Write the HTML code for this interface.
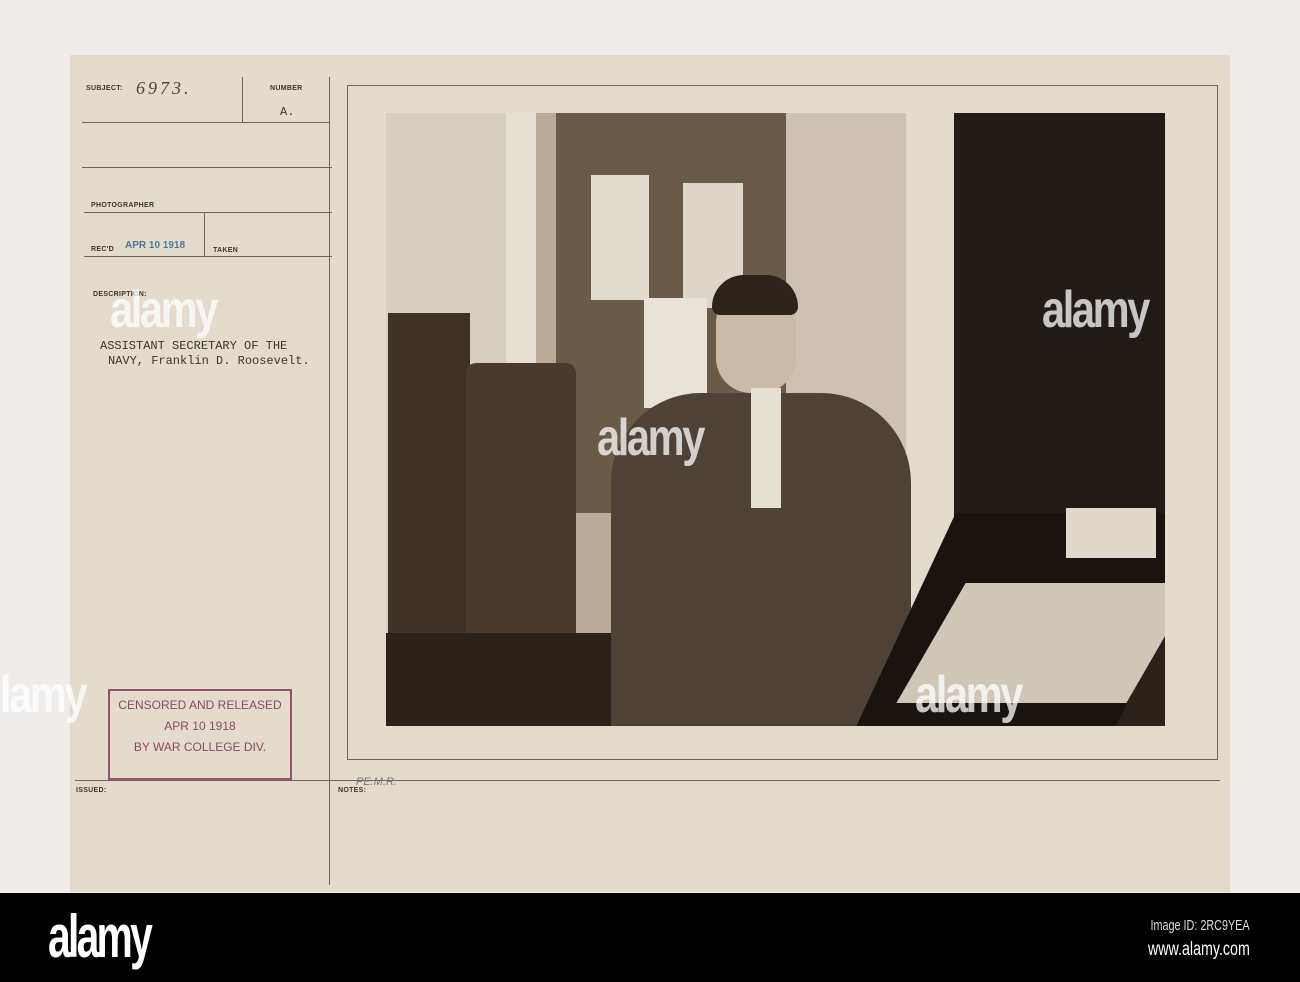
<!DOCTYPE html>
<html><head><style>
body{margin:0;width:1300px;height:982px;background:#efecea;position:relative;overflow:hidden;font-family:"Liberation Sans",sans-serif}
.a{position:absolute}
.card{left:70px;top:55px;width:1160px;height:837px;background:#e4dbcc}
.l{position:absolute;background:#6e665c}
.t{position:absolute;font-size:7px;font-weight:bold;color:#3a352f;letter-spacing:.3px}
.mono{position:absolute;font-family:"Liberation Mono",monospace;font-size:12px;color:#3a3530}
.bar{left:0;top:893px;width:1300px;height:89px;background:#000}
.wm{position:absolute;color:rgba(255,255,255,.75);font-weight:bold;font-size:52px;letter-spacing:-3px;transform:scaleX(.8);transform-origin:left}
</style></head><body>
<div class="a card"></div>
<div class="l" style="left:82px;top:122px;width:248px;height:1px"></div>
<div class="l" style="left:82px;top:167px;width:250px;height:1px"></div>
<div class="l" style="left:84px;top:212px;width:248px;height:1px"></div>
<div class="l" style="left:84px;top:256px;width:248px;height:1px"></div>
<div class="l" style="left:242px;top:77px;width:1px;height:45px"></div>
<div class="l" style="left:204px;top:213px;width:1px;height:43px"></div>
<div class="l" style="left:329px;top:77px;width:1px;height:808px"></div>
<div class="l" style="left:75px;top:780px;width:1145px;height:1px"></div>
<div class="l" style="left:347px;top:85px;width:871px;height:1px"></div>
<div class="l" style="left:347px;top:85px;width:1px;height:675px"></div>
<div class="l" style="left:1217px;top:85px;width:1px;height:675px"></div>
<div class="l" style="left:347px;top:759px;width:871px;height:1px"></div>
<div class="t" style="left:86px;top:85px">SUBJECT:</div>
<div class="a" style="left:136px;top:78px;font-family:'Liberation Serif',serif;font-style:italic;font-size:18px;color:#4a4540;letter-spacing:3px">6973.</div>
<div class="t" style="left:270px;top:85px">NUMBER</div>
<div class="mono" style="left:280px;top:105px">A.</div>
<div class="t" style="left:91px;top:202px">PHOTOGRAPHER</div>
<div class="t" style="left:91px;top:246px">REC'D</div>
<div class="a" style="left:125px;top:240px;font-size:10px;color:#4c7a95;font-weight:bold">APR 10 1918</div>
<div class="t" style="left:213px;top:247px">TAKEN</div>
<div class="t" style="left:93px;top:291px">DESCRIPTION:</div>
<div class="mono" style="left:100px;top:339px">ASSISTANT SECRETARY OF THE</div>
<div class="mono" style="left:108px;top:354px">NAVY, Franklin D. Roosevelt.</div>
<div class="a" style="left:108px;top:689px;width:184px;height:91px;border:2px solid #96506a;box-sizing:border-box;color:#8a4a64;text-align:center;font-size:12px;line-height:21px;padding-top:4px">CENSORED AND RELEASED<br>APR 10 1918<br>BY WAR COLLEGE DIV.</div>
<div class="t" style="left:76px;top:787px">ISSUED:</div>
<div class="t" style="left:338px;top:787px">NOTES:</div>
<div class="a" style="left:356px;top:776px;font-size:11px;color:#777;font-style:italic">PE.M.R.</div>
<div class="a" style="left:386px;top:113px;width:779px;height:613px;background:#b9ab98;overflow:hidden">
 <div class="a" style="left:0;top:0;width:120px;height:613px;background:#d7cebf"></div>
 <div class="a" style="left:120px;top:0;width:30px;height:613px;background:#e6dfd4"></div>
 <div class="a" style="left:170px;top:0;width:230px;height:400px;background:#6a5a48"></div>
 <div class="a" style="left:205px;top:62px;width:58px;height:125px;background:#e2dbd0"></div>
 <div class="a" style="left:297px;top:70px;width:60px;height:125px;background:#ddd5c7"></div>
 <div class="a" style="left:258px;top:185px;width:63px;height:110px;background:#e8e2d8"></div>
 <div class="a" style="left:400px;top:0;width:120px;height:613px;background:#cdc2b2"></div>
 <div class="a" style="left:520px;top:0;width:50px;height:613px;background:#e2dacd"></div>
 <div class="a" style="left:568px;top:0;width:211px;height:613px;background:#231c16"></div>
 <div class="a" style="left:2px;top:200px;width:82px;height:320px;background:#3e3127"></div>
 <div class="a" style="left:80px;top:250px;width:110px;height:280px;background:#4a3a2e;border-radius:10px 10px 0 0"></div>
 <div class="a" style="left:0;top:520px;width:779px;height:93px;background:#2a211a"></div>
 <div class="a" style="left:330px;top:170px;width:80px;height:110px;background:#c9bba8;border-radius:40px 40px 35px 35px"></div>
 <div class="a" style="left:326px;top:162px;width:86px;height:40px;background:#2c231c;border-radius:40px 40px 10px 10px"></div>
 <div class="a" style="left:225px;top:280px;width:300px;height:333px;background:#4e4236;border-radius:90px 90px 0 0"></div>
 <div class="a" style="left:365px;top:275px;width:30px;height:120px;background:#e6dfd4"></div>
 <div class="a" style="left:520px;top:400px;width:260px;height:213px;background:#1a1410;transform:skewX(-25deg)"></div>
 <div class="a" style="left:680px;top:395px;width:90px;height:50px;background:#e0d8cb"></div>
 <div class="a" style="left:545px;top:470px;width:230px;height:120px;background:#cfc6b7;transform:skewX(-30deg)"></div>
</div>
<div class="wm" style="left:110px;top:280px">alamy</div>
<div class="wm" style="left:1042px;top:280px">alamy</div>
<div class="wm" style="left:597px;top:408px">alamy</div>
<div class="wm" style="left:915px;top:665px">alamy</div>
<div class="wm" style="left:0px;top:665px">lamy</div>
<div class="a bar"></div>
<div class="a" style="left:48px;top:902px;color:#fff;font-weight:bold;font-size:60px;letter-spacing:-4px;transform:scaleX(.68);transform-origin:left">alamy</div>
<div class="a" style="right:50px;top:917px;color:#ddd;font-size:15px;transform:scaleX(.72);transform-origin:right">Image ID: 2RC9YEA</div>
<div class="a" style="right:50px;top:939px;color:#fff;font-size:19px;transform:scaleX(.75);transform-origin:right">www.alamy.com</div>
</body></html>
